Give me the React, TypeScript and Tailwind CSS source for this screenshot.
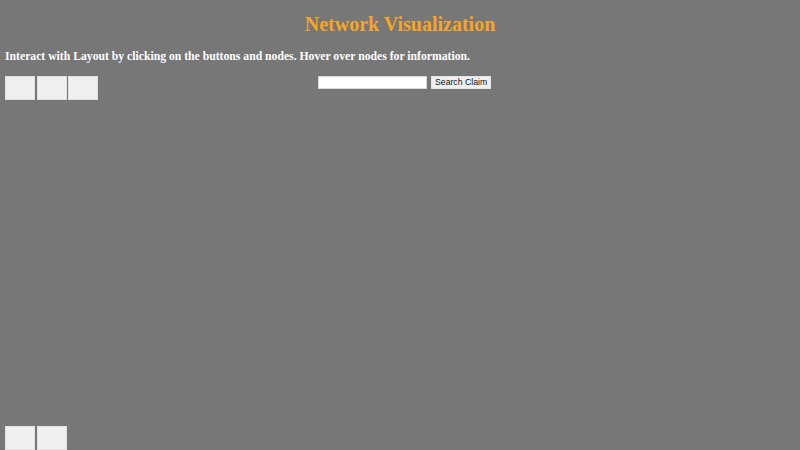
import React from "react";

const serif = { fontFamily: '"Liberation Serif", "Times New Roman", serif' };
const sans = { fontFamily: '"Liberation Sans", Arial, sans-serif' };

function BlankButton() {
  return <button className="h-[24px] w-[30px] border border-[#e2e2e2] bg-[#f0f0f0]" />;
}

export default function App() {
  return (
    <div className="flex h-[450px] w-[800px] flex-col overflow-hidden bg-[#777777]" style={serif}>
      <h1 className="mt-[12px] text-center text-[20px] font-bold leading-[24px] text-[#f5a623]">
        Network Visualization
      </h1>
      <p className="mt-[13px] pl-[5px] text-[11.7px] font-bold leading-[15px] text-white">
        Interact with Layout by clicking on the buttons and nodes. Hover over nodes for information.
      </p>
      <div className="mt-[12px] flex items-start">
        <div className="flex gap-[1.5px] pl-[5px]">
          <BlankButton />
          <BlankButton />
          <BlankButton />
        </div>
        <div className="ml-[220px] flex items-center gap-[4px]" style={sans}>
          <input className="h-[13px] w-[109px] border border-[#d8d8d8] bg-white" />
          <button className="h-[13px] border border-[#e4e4e4] bg-[#f0f0f0] px-[3px] text-[8.7px] leading-[11px] text-[#111]">
            Search Claim
          </button>
        </div>
      </div>
      <div className="flex-1" />
      <div className="flex gap-[1.5px] pl-[5px]">
        <BlankButton />
        <BlankButton />
      </div>
    </div>
  );
}
